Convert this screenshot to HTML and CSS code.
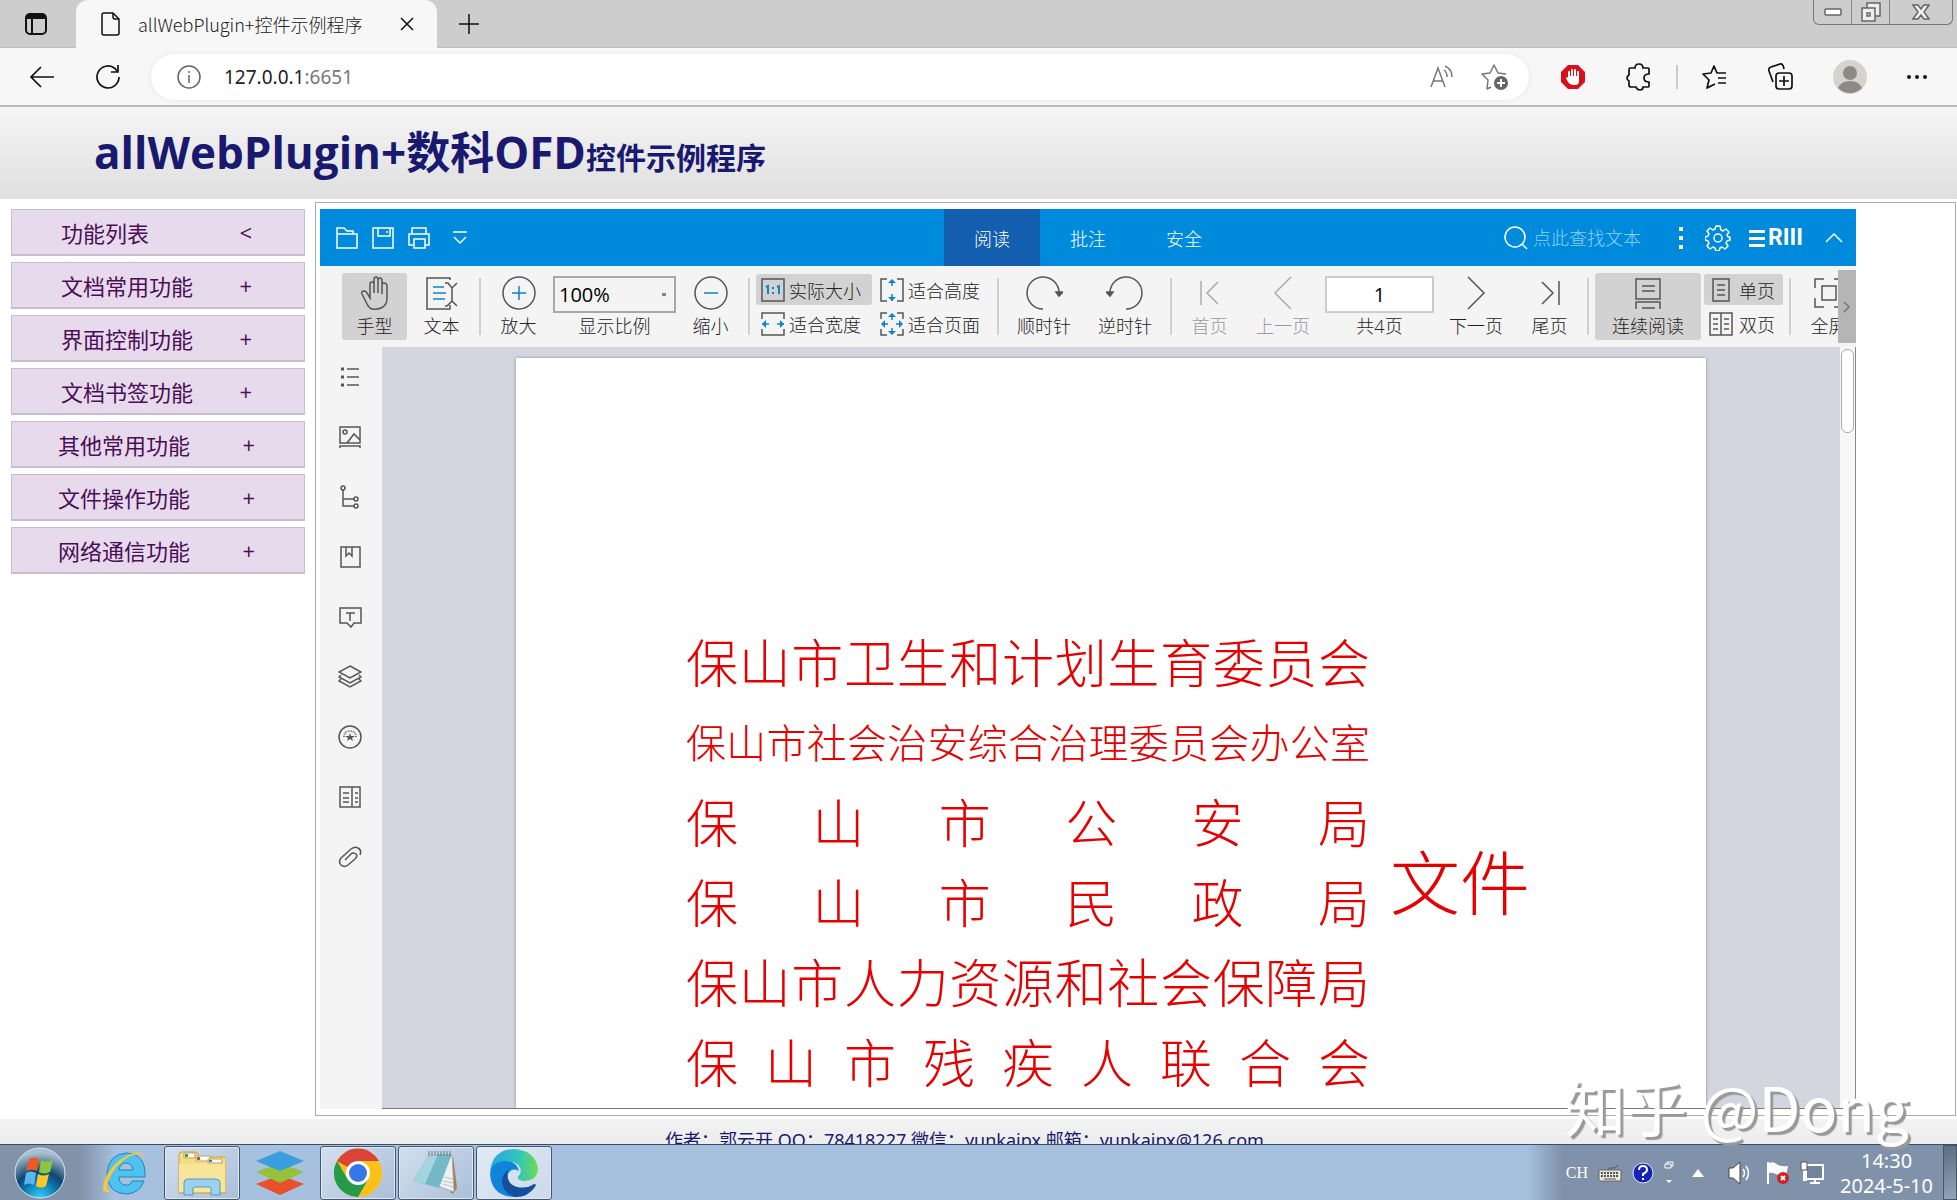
FILE: index.html
```html
<!DOCTYPE html>
<html lang="zh-CN">
<head>
    <meta charset="UTF-8">
    <meta name="viewport" content="width=device-width, initial-scale=1.0">
    <title>allWebPlugin+控件示例程序</title>
    <link rel="stylesheet" href="styles.css">
</head>
<body>
    <!-- Browser tab strip -->
    <div class="tab-strip">
        <button class="icon-btn tab-actions" aria-label="标签页操作">
            <svg width="24" height="24" viewBox="0 0 24 24"><rect x="2" y="2" width="20" height="20" rx="4" fill="none" stroke="#111" stroke-width="2"/><path d="M2 7V5q0-3 3-3h14q3 0 3 3v2z" fill="#111"/><path d="M8 7v15" stroke="#111" stroke-width="2"/></svg>
        </button>
        <div class="browser-tab">
            <svg width="20" height="26" viewBox="0 0 20 26" fill="none" stroke="#111" stroke-width="1.500"><path d="M3 2h9l6 6v14q0 2-2 2H3q-2 0-2-2V4q0-2 2-2z"/><path d="M12 2v4q0 2 2 2h4"/></svg>
            <span class="tab-title">allWebPlugin+控件示例程序</span>
            <button class="icon-btn" aria-label="关闭标签页">
                <svg width="14" height="14" viewBox="0 0 14 14"><path d="M1 1l12 12M13 1L1 13" stroke="#111" stroke-width="1.500"/></svg>
            </button>
        </div>
        <button class="icon-btn new-tab" aria-label="新建标签页">
            <svg width="20" height="20" viewBox="0 0 20 20"><path d="M10 0v20M0 10h20" stroke="#111" stroke-width="1.500"/></svg>
        </button>
        <div class="window-buttons">
            <button aria-label="最小化"><svg width="18" height="8" viewBox="0 0 18 8"><rect x="1" y="1" width="16" height="6" rx="1" fill="#fff" stroke="#666" stroke-width="1.5"/></svg></button>
            <button aria-label="还原"><svg width="20" height="20" viewBox="0 0 20 20" fill="#eee" stroke="#666" stroke-width="1.5"><rect x="6" y="1" width="13" height="13"/><rect x="1" y="6" width="13" height="13"/><rect x="6" y="11" width="3" height="3"/></svg></button>
            <button class="close" aria-label="关闭"><svg width="18" height="16" viewBox="0 0 18 16"><path d="M1 1h5l3 4 3-4h5l-5 7 5 7h-5l-3-4-3 4H1l5-7z" fill="#eee" stroke="#666" stroke-width="1.5"/></svg></button>
        </div>
    </div>

    <!-- Address bar -->
    <div class="nav-bar">
        <button class="icon-btn" aria-label="后退">
            <svg width="26" height="24" viewBox="0 0 26 24" fill="none" stroke="#111" stroke-width="1.700"><path d="M12 2L2 12l10 10M2 12h23"/></svg>
        </button>
        <button class="icon-btn" aria-label="刷新">
            <svg width="26" height="26" viewBox="0 0 26 26" fill="none" stroke="#111" stroke-width="1.700"><path d="M24 13A11 11 0 1 1 20 4.500L22 7M23 1v7h-7"/></svg>
        </button>
        <div class="address">
            <svg width="26" height="26" viewBox="0 0 26 26" fill="none" stroke="#666" stroke-width="1.500"><circle cx="13" cy="13" r="11"/><path d="M13 11v8M13 7v2"/></svg>
            <span class="url">127.0.0.1<span class="port">:6651</span></span>
            <button class="icon-btn" aria-label="朗读">
                <svg width="26" height="24" viewBox="0 0 26 24" fill="none" stroke="#777" stroke-width="1.500"><path d="M2 22L9 3l7 19M4 16h10M15 5q3 2 3 7M16 1q7 3 7 11"/></svg>
            </button>
            <button class="icon-btn" aria-label="收藏">
                <svg width="28" height="28" viewBox="0 0 28 28"><path d="M10 24l-4 2 1-9-6-6 8-1 4-8 4 8 8 1" fill="none" stroke="#777" stroke-width="1.500" stroke-linejoin="round"/><circle cx="20" cy="20" r="7" fill="#666"/><path d="M20 16v8M16 20h8" stroke="#fff" stroke-width="2"/></svg>
            </button>
        </div>
        <div class="nav-tools">
            <button class="icon-btn" aria-label="广告拦截">
                <svg width="26" height="26" viewBox="0 0 26 26"><path d="M8 1h10l7 7v10l-7 7H8l-7-7V8z" fill="#d9101a"/><path d="M9 14V8M12 14V6M15 14V6M18 15V8" stroke="#fff" stroke-width="2" stroke-linecap="round"/><path d="M8 12h11v5q0 4-4 4h-2q-3 0-5-3l-2-4q1-2 2 0z" fill="#fff"/></svg>
            </button>
            <button class="icon-btn" aria-label="扩展">
                <svg width="26" height="28" viewBox="0 0 26 28"><path d="M4 5h5q0-4 4-4t4 4h5q1 0 1 1v5q-5 0-5 4t5 4v4q0 1-1 1h-5q0 3-3 3t-4-3H5q-2 0-2-2v-4q-2-1-2-3t2-3V7q0-2 1-2z" fill="none" stroke="#111" stroke-width="1.700"/></svg>
            </button>
            <span class="nav-line"></span>
            <button class="icon-btn" aria-label="收藏夹">
                <svg width="26" height="26" viewBox="0 0 26 26" fill="none" stroke="#111" stroke-width="1.700" stroke-linejoin="round"><path d="M14 20l-8 4 2-8-6-6 8-1 3-7 3 7h2M17 9h8M17 14h8M17 19h8"/></svg>
            </button>
            <button class="icon-btn" aria-label="集锦">
                <svg width="26" height="28" viewBox="0 0 26 28" fill="none" stroke="#111" stroke-width="1.700"><rect x="9" y="10" width="16" height="16" rx="3"/><path d="M17 13v10M12 18h10M6 19L2 8q-1-3 2-4l9-3q3-1 4 5"/></svg>
            </button>
            <button class="icon-btn" aria-label="个人资料">
                <svg width="34" height="34" viewBox="0 0 34 34"><circle cx="17" cy="17" r="17" fill="#d5d3d0"/><circle cx="17" cy="13" r="7" fill="#8d8a86"/><path d="M5 28q3-7 12-7t12 7a17 17 0 0 1-24 0z" fill="#8d8a86"/></svg>
            </button>
            <button class="icon-btn" aria-label="更多">
                <svg width="20" height="6" viewBox="0 0 20 6" fill="#111"><circle cx="2" cy="3" r="2"/><circle cx="10" cy="3" r="2"/><circle cx="18" cy="3" r="2"/></svg>
            </button>
        </div>
    </div>

    <!-- Page header -->
    <header class="page-header">
        <h1>allWebPlugin+数科OFD<small>控件示例程序</small></h1>
    </header>

    <div class="page-body">
        <!-- Function menu -->
        <nav class="menu">
            <a href="#">功能列表<span>&lt;</span></a>
            <a href="#">文档常用功能<span>+</span></a>
            <a href="#">界面控制功能<span>+</span></a>
            <a href="#">文档书签功能<span>+</span></a>
            <a href="#" class="other">其他常用功能<span>+</span></a>
            <a href="#" class="other">文件操作功能<span>+</span></a>
            <a href="#" class="other">网络通信功能<span>+</span></a>
        </nav>

        <div class="frame">
            <div class="viewer">
                <!-- Viewer title bar -->
                <div class="viewer-bar">
                    <div class="quick">
                        <button class="icon-btn" aria-label="打开"><svg width="22" height="22" viewBox="0 0 22 22" fill="none" stroke="#fff" stroke-width="1.500"><path d="M1 21V1h7l3 3h6v3M1 7h20v14H1z"/></svg></button>
                        <button class="icon-btn" aria-label="保存"><svg width="22" height="22" viewBox="0 0 22 22" fill="none" stroke="#fff" stroke-width="1.500"><path d="M1 1h20v20H1zM6 1v8h12V1M15 4v2"/></svg></button>
                        <button class="icon-btn" aria-label="打印"><svg width="22" height="22" viewBox="0 0 22 22" fill="none" stroke="#fff" stroke-width="1.500"><path d="M4 7V1h14v6M5 18H1V7h20v11h-4M6 12h11v9H6z"/></svg></button>
                        <button class="icon-btn more" aria-label="更多"><svg width="16" height="14" viewBox="0 0 16 14" fill="none" stroke="#fff" stroke-width="1.500"><path d="M1 1h14M2 6l6 6 6-6"/></svg></button>
                    </div>
                    <div class="viewer-tabs">
                        <button class="active">阅读</button>
                        <button>批注</button>
                        <button>安全</button>
                    </div>
                    <div class="viewer-right">
                        <label class="search">
                            <svg width="24" height="24" viewBox="0 0 24 24" fill="none" stroke="#fff" stroke-width="1.500"><circle cx="11" cy="11" r="10"/><path d="M18 18l5 5"/></svg>
                            <input type="text" placeholder="点此查找文本" aria-label="点此查找文本">
                        </label>
                        <button class="icon-btn" aria-label="选项"><svg width="4" height="22" viewBox="0 0 4 22" fill="#fff"><path d="M0 0h4v4H0zM0 9h4v4H0zM0 18h4v4H0z"/></svg></button>
                        <button class="icon-btn" aria-label="设置"><svg width="26" height="26" viewBox="0 0 26 26" fill="none" stroke="#fff" stroke-width="1.500" stroke-linejoin="round"><path d="M11 1h4l1 4 2 1 3-2 3 3-2 3 1 2 2 0v3l-3 1-1 2 2 3-3 3-3-2-2 1-1 3h-3l-1-3-2-1-3 2-3-3 2-3-1-2-3-1v-3l3-1 1-2-2-3 3-3 3 2 2-1z"/><circle cx="13" cy="13" r="4"/></svg></button>
                        <span class="brand"><svg width="16" height="18" viewBox="0 0 16 18"><path d="M0 1h16v3H0zM0 8h16v3H0zM0 15h16v3H0z" fill="#fff"/></svg>RIII</span>
                        <button class="icon-btn" aria-label="收起"><svg width="18" height="10" viewBox="0 0 18 10" fill="none" stroke="#fff" stroke-width="1.500"><path d="M1 9l8-8 8 8"/></svg></button>
                    </div>
                </div>

                <!-- Ribbon -->
                <div class="ribbon">
                    <div class="ribbon-items">
                        <button class="tool hand active"><svg width="34" height="34" viewBox="0 0 34 34" class="line"><path d="M14 33Q11 32 9 28L4 18q-1-3 2-3 2 0 3 2l3 5V8q0-2 2-2t2 2v9V4q0-3 2-3t2 3v13V5q0-3 2-3t2 3v13V9q0-2 2-2t3 2v13q0 6-4 9-5 3-10 2z"/></svg>手型</button>
                        <button class="tool"><svg width="34" height="34" viewBox="0 0 34 34" class="line"><path d="M25 4V2H2v31h23v-4M20 7h3l4 5 5-5M27 12v13M20 30h2l5-5 5 5"/><path class="blue" d="M8 11h11M8 17h13M8 23h12"/></svg>文本</button>
                        <span class="line-sep"></span>
                        <button class="tool"><svg width="34" height="34" viewBox="0 0 34 34" class="line"><circle cx="17" cy="17" r="16"/><path class="blue" d="M17 10v14M10 17h14"/></svg>放大</button>
                        <label class="tool field zoom"><select><option>100%</option></select>显示比例</label>
                        <button class="tool"><svg width="34" height="34" viewBox="0 0 34 34" class="line"><circle cx="17" cy="17" r="16"/><path class="blue" d="M10 17h14"/></svg>缩小</button>
                        <span class="line-sep"></span>
                        <div class="stack">
                            <button class="active"><svg width="24" height="24" viewBox="0 0 24 24" class="line"><path d="M1 1h22v22H1z"/><path class="blue" d="M5 9l2-1v8M16 9l2-1v8M12 9v2M12 14v2" stroke-width="2"/></svg>实际大小</button>
                            <button><svg width="24" height="24" viewBox="0 0 24 24" class="line"><path d="M1 7V1h22v6M1 17v6h22v-6"/><path class="blue" d="M8 12H1M16 12h7"/><path class="tip" d="M5 8v8l-4-4zM19 8v8l4-4z"/></svg>适合宽度</button>
                        </div>
                        <div class="stack">
                            <button><svg width="24" height="24" viewBox="0 0 24 24" class="line"><path d="M7 1H1v22h6M17 1h6v22h-6"/><path class="blue" d="M12 8V2M12 16v7"/><path class="tip" d="M8 5h8l-4-4zM8 19h8l-4 4z"/></svg>适合高度</button>
                            <button><svg width="24" height="24" viewBox="0 0 24 24" class="line"><path d="M7 1H1v6M17 1h6v6M1 17v6h6M23 17v6h-6"/><path class="blue" d="M12 8V2M12 16v6M8 12H2M16 12h6"/><path class="tip" d="M8 5h8l-4-4zM8 19h8l-4 4zM5 8v8l-4-4zM19 8v8l4-4z"/></svg>适合页面</button>
                        </div>
                        <span class="line-sep"></span>
                        <button class="tool wide"><svg width="38" height="34" viewBox="0 0 38 34" class="line"><path d="M18 33A16 16 0 1 1 34 18"/><path d="M31 16h7l-4 4z" fill="#555"/></svg>顺时针</button>
                        <button class="tool wide"><svg width="38" height="34" viewBox="0 0 38 34" class="line"><path d="M20 33A16 16 0 1 0 4 18"/><path d="M7 16H0l4 4z" fill="#555"/></svg>逆时针</button>
                        <span class="line-sep"></span>
                        <button class="tool" disabled><svg width="34" height="34" viewBox="0 0 34 34" class="line"><path d="M8 5v24M25 6L14 17l11 11"/></svg>首页</button>
                        <button class="tool wide" disabled><svg width="34" height="34" viewBox="0 0 34 34" class="line"><path d="M25 1L9 17l16 16"/></svg>上一页</button>
                        <label class="tool field page-no"><input type="text" value="1">共4页</label>
                        <button class="tool wide"><svg width="34" height="34" viewBox="0 0 34 34" class="line"><path d="M9 1l16 16L9 33"/></svg>下一页</button>
                        <button class="tool"><svg width="34" height="34" viewBox="0 0 34 34" class="line"><path d="M9 6l11 11L9 28M26 5v24"/></svg>尾页</button>
                        <span class="line-sep"></span>
                        <button class="tool active reading"><svg width="34" height="34" viewBox="0 0 34 34" class="line"><path d="M5 3h24v20H5zM11 10h13M11 15h13M5 33v-7h24v7M11 32h13"/></svg>连续阅读</button>
                        <div class="stack pages">
                            <button class="active"><svg width="24" height="24" viewBox="0 0 24 24" class="line"><path d="M4 1h16v22H4zM8 7h8M8 12h8M8 17h8"/></svg>单页</button>
                            <button><svg width="24" height="24" viewBox="0 0 24 24" class="line"><path d="M1 1h22v22H1zM12 1v22M4 7h5M4 12h5M4 17h5M15 7h5M15 12h5M15 17h5"/></svg>双页</button>
                        </div>
                        <span class="line-sep"></span>
                        <button class="tool"><svg width="34" height="34" viewBox="0 0 34 34" class="line"><path d="M3 12V3h9M22 3h9v9M3 22v9h9M22 31h9v-9M10 10h14v14H10z"/></svg>全屏</button>
                    </div>
                    <button class="ribbon-more" aria-label="更多工具"><svg width="8" height="12" viewBox="0 0 8 12"><path d="M1 1l5 5-5 5" fill="none" stroke="#777" stroke-width="1.500"/></svg></button>
                </div>

                <div class="viewer-body">
                    <!-- Side panel icons -->
                    <div class="side-icons">
                        <button class="icon-btn" aria-label="大纲"><svg width="24" height="24" viewBox="0 0 24 24" class="line"><path d="M9 4h12M9 12h12M9 20h12"/><path d="M3 4h3M3 12h3M3 20h3" stroke-width="3"/></svg></button>
                        <button class="icon-btn" aria-label="缩略图"><svg width="24" height="24" viewBox="0 0 24 24" class="line"><path d="M2 2h20v16H2zM9 18l7-9 6 6M2 23v-2h20v2"/><circle cx="7" cy="7" r="2"/></svg></button>
                        <button class="icon-btn" aria-label="结构"><svg width="24" height="24" viewBox="0 0 24 24" class="line"><path d="M5 5v16h11M5 14h11"/><circle cx="5" cy="3" r="2"/><circle cx="18" cy="14" r="2"/><circle cx="18" cy="21" r="2"/></svg></button>
                        <button class="icon-btn" aria-label="书签"><svg width="24" height="24" viewBox="0 0 24 24" class="line"><path d="M3 2h19v20H3zM8 2v9l3-3 3 3V2"/></svg></button>
                        <button class="icon-btn" aria-label="批注"><svg width="24" height="24" viewBox="0 0 24 24" class="line"><path d="M2 3h21v15h-7l-3 4-4-4H2zM8 8h9M12 8v8"/></svg></button>
                        <button class="icon-btn" aria-label="图层"><svg width="24" height="24" viewBox="0 0 24 24" class="line"><path d="M12 1l11 6-11 6L1 7zM3 10l-2 2 11 6 11-6-2-2M3 14l-2 2 11 6 11-6-2-2"/></svg></button>
                        <button class="icon-btn" aria-label="签章"><svg width="24" height="24" viewBox="0 0 24 24" class="line"><circle cx="12" cy="12" r="11"/><path d="M6 12q0-6 6-6t6 6" stroke-dasharray="1 1"/><path d="M12 8l1 3h4l-3 2 1 3-3-2-3 2 1-3-3-2h4z" fill="#555" stroke="none"/></svg></button>
                        <button class="icon-btn" aria-label="目录"><svg width="24" height="24" viewBox="0 0 24 24" class="line"><path d="M2 2h20v20H2zM14 2v20M5 8h6M5 13h6M5 17h6M17 8h3M17 13h3M17 17h3"/></svg></button>
                        <button class="icon-btn" aria-label="附件"><svg width="24" height="24" viewBox="0 0 24 24" class="line"><path d="M22 10q2-5-2-7-3-2-7 1L3 13q-3 4 0 7 3 3 7 0l7-6q3-3 1-5-3-2-5 0l-6 6"/></svg></button>
                    </div>
                    <!-- Document -->
                    <div class="canvas">
                        <div class="paper">
                            <div class="issuers">
                                <p>保山市卫生和计划生育委员会</p>
                                <p class="long">保山市社会治安综合治理委员会办公室</p>
                                <p>保山市公安局</p>
                                <p>保山市民政局</p>
                                <p>保山市人力资源和社会保障局</p>
                                <p>保山市残疾人联合会</p>
                            </div>
                            <div class="doc-word">文件</div>
                        </div>
                    </div>
                    <div class="scrollbar"><div class="thumb"></div></div>
                </div>
            </div>
        </div>
    </div>

    <footer class="page-footer">作者：郭云开 QQ：78418227 微信：yunkaipx 邮箱：yunkaipx@126.com</footer>

    <!-- Taskbar -->
    <div class="taskbar">
        <button class="start" aria-label="开始">
            <svg width="52" height="52" viewBox="0 0 52 52">
                <defs>
                    <radialGradient id="orb" cx=".5" cy="1" r=".9"><stop offset="0" stop-color="#2fd4ff"/><stop offset=".45" stop-color="#0b679f"/><stop offset=".6" stop-color="#12466f"/><stop offset="1" stop-color="#a9bfd0"/></radialGradient>
                </defs>
                <circle cx="26" cy="26" r="25" fill="url(#orb)" stroke="#d5e5f2" stroke-width="1"/>
                <path d="M15 12q5-3 10 0l-2 12q-5-3-11 0z" fill="#ee5a24"/>
                <path d="M27 13q6 3 12 0l-3 12q-6 3-11 0z" fill="#8cc63e"/>
                <path d="M12 26q5-3 10 0l-2 12q-5-3-10 0z" fill="#5db5ef"/>
                <path d="M24 27q5 3 11 0l-3 12q-5 3-10 0z" fill="#fdc827"/>
            </svg>
        </button>
        <button class="task" aria-label="Internet Explorer">
            <svg width="48" height="48" viewBox="0 0 48 48"><path d="M44 32H32q-2 5-7 4-6-1-6-8h26q1-23-18-24Q8 5 7 25q1 20 20 20 13-1 17-13zM19 21q1-7 7-7t7 7z" fill="#4fc3f0" stroke="#1f83c2" stroke-width="1"/><path d="M44 11Q43-1 28 6 12 14 5 30-1 47 12 42q-7 1-4-9Q14 16 30 7q12-5 14 4z" fill="#f7ca35"/></svg>
        </button>
        <button class="task open" aria-label="资源管理器">
            <svg width="48" height="48" viewBox="0 0 48 48"><path d="M1 6q0-3 3-3h14l4 5h25q1 0 1 2v34H1z" fill="#f7dc83" stroke="#c89f3d"/><path d="M6 4h11v5H6zM18 7h14v5H18zM30 10h14v4H30z" fill="#fff" stroke="#bba35a"/><path d="M7 5h3v3H7z" fill="#3c9b55"/><path d="M19 8h3v3h-3z" fill="#d64b28"/><path d="M31 11h3v2h-3z" fill="#2b7fc2"/><path d="M1 15h46v28H1z" fill="#f9e59a"/><path d="M6 46V34q0-4 4-4h28q4 0 4 4v12h-9v-6q0-2-2-2H17q-2 0-2 2v6z" fill="#9bd2ee" stroke="#4c9bc7"/></svg>
        </button>
        <button class="task" aria-label="ONLYOFFICE">
            <svg width="48" height="48" viewBox="0 0 48 48"><path d="M24 26L48 35 24 46 0 35z" fill="#e8502b"/><path d="M24 14l24 9-24 11L0 23z" fill="#96c13c"/><path d="M24 2l24 10-24 10L0 12z" fill="#3a9de0"/></svg>
        </button>
        <button class="task open" aria-label="Chrome">
            <svg width="50" height="50" viewBox="0 0 50 50"><circle cx="25" cy="25" r="24" fill="#fbc116"/><path d="M25 25L4 13A24 24 0 0 1 46 13H25z" fill="#dd4236"/><path d="M4 13A24 24 0 0 0 25 49l11-19-11-5-11 5z" fill="#259a4b"/><circle cx="25" cy="25" r="12" fill="#fff"/><circle cx="25" cy="25" r="9" fill="#3578e5"/></svg>
        </button>
        <button class="task open" aria-label="记事本">
            <svg width="48" height="48" viewBox="0 0 48 48"><path d="M41 7l4 32-4 6-3-2z" fill="#a5814e"/><path d="M17 6h23l2 37-14-5z" fill="#eef1f3" stroke="#aaa"/><path d="M31 32l10 2M31 35l10 3M32 28l9 2" stroke="#b9c4ca"/><path d="M17 5h23L27 39 1 32z" fill="#74b9c8"/><path d="M17 5h9L13 35 1 32z" fill="#a4d5dd"/><path d="M17 2v5M20 2v5M23 2v5M26 2v5M29 2v5M32 2v5M35 2v5M38 2v5" stroke="#777"/></svg>
        </button>
        <button class="task open current" aria-label="Edge">
            <svg width="50" height="50" viewBox="0 0 50 50">
                <defs>
                    <linearGradient id="edgeTop"><stop offset="0" stop-color="#2aa5dc"/><stop offset=".6" stop-color="#35c5c0"/><stop offset="1" stop-color="#6ade4c"/></linearGradient>
                </defs>
                <path d="M1 23Q4 1 26 1q20 2 23 19 0 12-13 13-8 0-7-4 5-5 1-11Q22 8 1 23z" fill="url(#edgeTop)"/>
                <path d="M1 25q3-12 15-12 12 0 14 10-7-4-11 3-4 12 7 19 4 3 3 4Q2 50 1 25z" fill="#0f84d8"/>
                <path d="M19 22q-3 13 9 17 10 2 17-3 3 0 1 3-7 10-19 10-13-3-14-15 0-8 6-12z" fill="#144f9e"/>
            </svg>
        </button>
        <div class="tray">
            <span class="lang">CH</span>
            <svg width="24" height="18" viewBox="0 0 24 18"><path d="M10 6q1-3 4-2 4 1 6-3" fill="none" stroke="#555"/><path d="M1 6h22v11H1z" fill="#e9e5d8" stroke="#666"/><path d="M3 9h18M3 12h18" stroke="#555" stroke-width="2" stroke-dasharray="2 1"/><path d="M6 15h12" stroke="#555"/></svg>
            <svg width="22" height="22" viewBox="0 0 22 22"><circle cx="11" cy="11" r="10" fill="#1524b5" stroke="#dfe4ff"/><path d="M7 8q0-4 4-4t4 4q0 2-4 4v2M11 16v2" fill="none" stroke="#fff" stroke-width="2"/></svg>
            <svg width="10" height="24" viewBox="0 0 10 24"><path d="M3 3V1h6v4H7M1 3h6v4H1z" fill="none" stroke="#fff"/><path d="M2 19h6l-3 3z" fill="#fff"/></svg>
            <svg class="up" width="12" height="8" viewBox="0 0 12 8"><path d="M6 0l6 8H0z" fill="#fff"/></svg>
            <svg class="speaker" width="24" height="24" viewBox="0 0 24 24"><path d="M1 7h4l7-6v22l-7-6H1z" fill="#fff" stroke="#444"/><path d="M15 8q3 4 0 8M18 5q5 7 0 14" fill="none" stroke="#fff" stroke-width="1.500"/></svg>
            <svg width="24" height="24" viewBox="0 0 24 24"><path d="M2 1v22" stroke="#fff" stroke-width="2"/><path d="M3 2q5-2 9 2 4 2 10 1l-2 9q-6 1-10-1-4-2-7-1z" fill="#fff"/><circle cx="17" cy="17" r="6" fill="#d02020"/><path d="M15 15l4 4M19 15l-4 4" stroke="#fff" stroke-width="2"/></svg>
            <svg width="24" height="24" viewBox="0 0 24 24"><path d="M6 4h17v14H6z" fill="#71849b" stroke="#fff" stroke-width="2"/><path d="M10 22h10M15 18v4M4 8v11h3" fill="none" stroke="#fff" stroke-width="2"/><path d="M1 1h6v8H1z" fill="#fff" stroke="#555"/></svg>
            <div class="clock"><span>14:30</span><span>2024-5-10</span></div>
        </div>
        <button class="show-desktop" aria-label="显示桌面"></button>
    </div>

    <div class="watermark">知乎 @Dong</div>
</body>
</html>
```
FILE: styles.css
```css
* {
    box-sizing: border-box;
}
body {
    margin: 0;
    height: 100vh;
    display: flex;
    flex-direction: column;
    overflow: hidden;
    background: #fff;
    color: #222;
    font-family: "Open Sans", "Noto Sans CJK SC", sans-serif;
    font-size: 18px;
}
button {
    padding: 0;
    border: none;
    background: none;
    color: inherit;
    font: inherit;
    cursor: pointer;
}
svg {
    display: block;
    flex: none;
}
.icon-btn {
    display: flex;
    align-items: center;
    justify-content: center;
}

/* Browser tab strip */
.tab-strip {
    height: 48px;
    flex: none;
    display: flex;
    align-items: center;
    background: #cdcdcd;
    border-bottom: 1px solid #bdbdbd;
}
.tab-actions {
    width: 76px;
    padding-right: 4px;
}
.browser-tab {
    width: 361px;
    height: 48px;
    display: flex;
    align-items: center;
    gap: 17px;
    padding: 0 23px 0 25px;
    background: #f7f7f7;
    border-radius: 12px 12px 0 0;
}
.tab-title {
    flex: 1;
    white-space: nowrap;
    font-family: "Noto Sans CJK SC", sans-serif;
    font-weight: 300;
    line-height: 24px;
}
.new-tab {
    width: 64px;
}
.window-buttons {
    align-self: flex-start;
    margin-left: auto;
    margin-right: 4px;
    display: flex;
    height: 25px;
    border: 1px solid #777;
    border-top: none;
    border-radius: 0 0 6px 6px;
}
.window-buttons button {
    width: 38px;
    display: flex;
    align-items: center;
    justify-content: center;
    border-right: 1px solid #888;
}
.window-buttons .close {
    width: 62px;
    border-right: none;
}

/* Address bar */
.nav-bar {
    height: 59px;
    flex: none;
    display: flex;
    align-items: center;
    gap: 40px;
    padding: 0 30px 0 29px;
    background: #f7f7f7;
    border-bottom: 2px solid #bababa;
}
.address {
    flex: 1;
    height: 46px;
    margin: 0 -9px 0 -10px;
    display: flex;
    align-items: center;
    gap: 26px;
    padding: 0 20px 0 25px;
    background: #fff;
    border-radius: 23px;
    box-shadow: 0 0 4px #e2e2e2;
}
.url {
    flex: 1;
    margin-left: -4px;
    font-family: "Noto Sans", sans-serif;
    font-size: 19px;
}
.port {
    color: #777;
}
.nav-tools {
    display: flex;
    align-items: center;
    gap: 40px;
}
.nav-line {
    width: 2px;
    height: 24px;
    margin: 0 -17px 0 -16px;
    background: #ccc;
}

/* Page header */
.page-header {
    height: 92px;
    flex: none;
    display: flex;
    align-items: center;
    padding: 3px 0 0 94px;
    background: linear-gradient(#f5f5f5, #dfdfdf);
}
.page-header h1 {
    margin: 0;
    color: #191970;
    font-size: 44px;
    line-height: 60px;
}
.page-header small {
    font-size: 30px;
}

.page-body {
    flex: 1;
    min-height: 0;
    display: flex;
    gap: 10px;
    padding: 3px 1px 3px 11px;
}

/* Function menu */
.menu {
    width: 294px;
    flex: none;
    display: flex;
    flex-direction: column;
    gap: 6px;
    padding-top: 7px;
}
.menu a {
    height: 47px;
    display: flex;
    align-items: center;
    justify-content: space-between;
    padding: 0 52px 0 49px;
    background: #e6daec;
    border: 1px solid #c9bcd0;
    border-bottom-width: 2px;
    color: #4b0d55;
    font-size: 22px;
    text-decoration: none;
}
.menu a.other {
    padding: 0 49px 0 46px;
}

/* Plugin frame */
.frame {
    flex: 1;
    min-width: 0;
    display: flex;
    border: 1px solid #aaa;
    padding: 6px 99px 6px 4px;
}
.viewer {
    flex: 1;
    min-width: 0;
    display: flex;
    flex-direction: column;
}
.viewer-bar {
    height: 57px;
    flex: none;
    display: grid;
    grid-template-columns: 1fr auto 1fr;
    background: #008adc;
    color: #fff;
    font-weight: 300;
}
.quick {
    display: flex;
    align-items: center;
    gap: 14px;
    padding-left: 16px;
}
.quick .more {
    margin-left: 8px;
}
.viewer-tabs {
    display: flex;
}
.viewer-tabs button {
    width: 96px;
}
.viewer-tabs .active {
    background: #145fad;
}
.viewer-right {
    display: flex;
    align-items: center;
    justify-content: flex-end;
    gap: 22px;
    padding-right: 13px;
}
.search {
    display: flex;
    align-items: center;
    gap: 5px;
}
.search input {
    width: 124px;
    padding: 0;
    border: none;
    outline: none;
    background: none;
    color: #fff;
    font: inherit;
}
.search input::placeholder {
    color: #8bd0f8;
    opacity: 1;
}
.brand {
    display: flex;
    align-items: center;
    gap: 3px;
    margin-left: -4px;
    font-family: Roboto, sans-serif;
    font-size: 23px;
    font-weight: bold;
}

/* Ribbon */
.ribbon {
    height: 81px;
    flex: none;
    display: flex;
    align-items: center;
    background: #f4f4f4;
    font-weight: 300;
}
.ribbon-items {
    flex: 1;
    min-width: 0;
    height: 67px;
    display: flex;
    gap: 3px;
    padding-left: 22px;
    overflow: hidden;
}
.ribbon-items > * {
    flex: none;
}
.line {
    fill: none;
    stroke: #555;
    stroke-width: 1.5;
}
.line .blue {
    stroke: #0d84cc;
}
.line .tip {
    fill: #0d84cc;
    stroke: none;
}
.tool {
    width: 63px;
    height: 67px;
    display: flex;
    flex-direction: column;
    align-items: center;
    justify-content: space-between;
    padding: 3px 0 1px;
    border-radius: 3px;
    line-height: 26px;
    white-space: nowrap;
}
.tool.hand {
    width: 65px;
}
.tool.wide {
    width: 78px;
}
.tool.reading {
    width: 106px;
}
.tool:disabled {
    color: #999;
}
.tool:disabled .line {
    stroke: #aaa;
}
.ribbon .active {
    background: #d2d2d2;
}
.field select,
.field input {
    width: 100%;
    height: 37px;
    border: 2px solid #a8a8a8;
    border-radius: 0;
    background: #f4f4f4;
    color: #000;
    font-family: inherit;
    font-size: 20px;
}
.field select {
    appearance: none;
    padding: 0 4px;
    background: #f4f4f4 linear-gradient(#888, #888) no-repeat right 8px center / 4px 3px;
}
.field input {
    border-color: #ccc;
    background: #fff;
    text-align: center;
}
.tool.zoom {
    width: 123px;
}
.tool.page-no {
    width: 109px;
}
.line-sep {
    width: 2px;
    height: 57px;
    margin: 5px 3px 0;
    background: #d0d0d0;
}
.stack {
    display: flex;
    flex-direction: column;
    justify-content: space-between;
    padding: 1px 0;
}
.stack button {
    width: 116px;
    height: 31px;
    display: flex;
    align-items: center;
    gap: 4px;
    padding-left: 5px;
    border-radius: 3px;
    white-space: nowrap;
}
.stack.pages button {
    width: 79px;
    gap: 6px;
}
.ribbon-more {
    width: 18px;
    height: 73px;
    display: flex;
    align-items: center;
    justify-content: center;
    background: #b5b5b5;
}

/* Viewer body */
.viewer-body {
    flex: 1;
    min-height: 0;
    display: flex;
}
.side-icons {
    width: 62px;
    flex: none;
    display: flex;
    flex-direction: column;
    align-items: center;
    gap: 36px;
    padding: 18px 2px 0 0;
    background: #f4f4f4;
}
.canvas {
    flex: 1;
    min-width: 0;
    padding: 11px 134px 0;
    background: #d5d5e0;
    border-bottom: 1px solid #777;
    overflow: hidden;
}
.paper {
    min-height: 100%;
    display: flex;
    align-items: flex-start;
    gap: 20px;
    padding: 265px 0 0 170px;
    background: #fff;
    box-shadow: 0 0 3px #888;
    color: #e60000;
    font-weight: 300;
}
.issuers {
    width: 684px;
}
.issuers p {
    margin: 0;
    font-size: 52px;
    line-height: 80px;
    white-space: nowrap;
    text-align: justify;
    text-align-last: justify;
}
.issuers .long {
    font-size: 40px;
}
.doc-word {
    padding-top: 210px;
    font-size: 70px;
    line-height: 100px;
    white-space: nowrap;
}
.scrollbar {
    width: 16px;
    padding: 2px 1px;
    background: #f7f7f7;
    border-right: 1px solid #888;
    border-bottom: 1px solid #777;
}
.thumb {
    height: 84px;
    border: 1px solid #aaa;
    border-radius: 6px;
    background: #fff;
}

.page-footer {
    height: 25px;
    flex: none;
    padding: 8px 28px 0 0;
    overflow: hidden;
    background: linear-gradient(#f3f3f3, #ececec);
    color: #191970;
    font-family: "Noto Sans", "Noto Sans CJK SC", sans-serif;
    line-height: 26px;
    text-align: center;
}

/* Taskbar */
.taskbar {
    height: 56px;
    flex: none;
    display: flex;
    align-items: center;
    gap: 2px;
    background: linear-gradient(90deg, #8292a9 80px, #a6c0dd 115px, #a6c0dd calc(100% - 430px), #8092aa calc(100% - 395px));
    border-top: 1px solid #34506f;
}
.start {
    width: 84px;
    padding-left: 14px;
}
.task {
    width: 76px;
    height: 54px;
    display: flex;
    align-items: center;
    justify-content: center;
    border: 1px solid transparent;
    border-radius: 3px;
}
.task.open {
    border-color: #45566d;
    background: linear-gradient(135deg, #d3dfed, #a9bfd9);
    box-shadow: inset 0 0 0 1px #dfe9f4;
}
.task.current {
    background: linear-gradient(135deg, #e2eaf4, #cbd9ea);
}
.tray {
    margin-left: auto;
    display: flex;
    align-items: center;
    gap: 10px;
    color: #fff;
}
.lang {
    font-family: "Liberation Serif", serif;
    font-size: 16px;
}
.up {
    margin: 0 14px 0 8px;
}
.tray .speaker {
    margin-right: 4px;
}
.clock {
    display: flex;
    flex-direction: column;
    align-items: center;
    margin: 0 8px 0 6px;
    font-family: "Noto Sans", sans-serif;
    font-size: 20px;
    line-height: 25px;
}
.show-desktop {
    width: 14px;
    height: 55px;
    border: 1px solid #46566b;
    background: linear-gradient(160deg, #5d6d82, #93a5bb);
}

/* Watermark over the page */
.watermark {
    position: absolute;
    right: 48px;
    bottom: 54px;
    color: #fff;
    font-family: "Noto Sans CJK SC", sans-serif;
    font-size: 61px;
    line-height: 80px;
    text-shadow: 3px 3px 1px #999;
    pointer-events: none;
}
```
